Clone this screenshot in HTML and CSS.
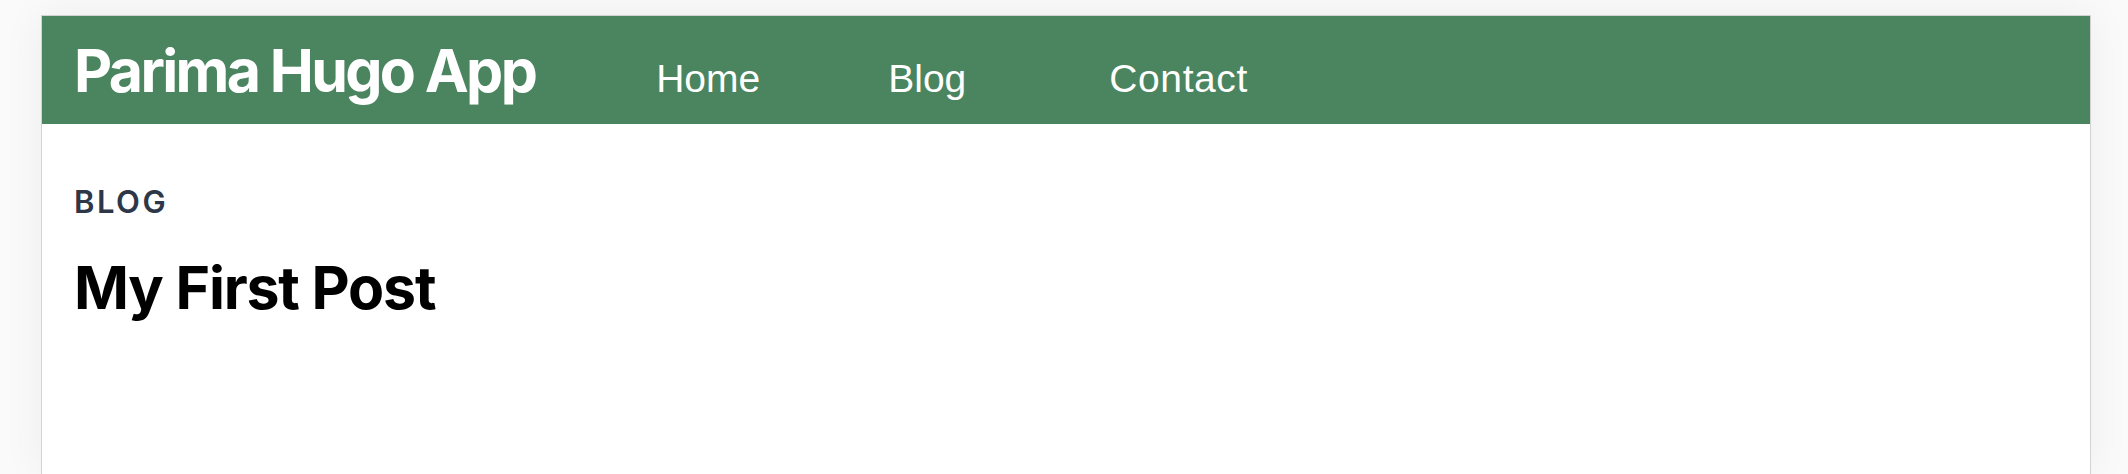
FILE: index.html
```html
<!DOCTYPE html>
<html lang="en">
<head>
<meta charset="utf-8">
<title>Parima Hugo App</title>
<link rel="stylesheet" href="styles.css">
</head>
<body>
<div class="page">
  <div class="card">
    <header class="site-header">
      <a class="brand" href="#">Parima Hugo App</a>
      <nav class="nav">
        <a class="nav-link" href="#">Home</a>
        <a class="nav-link" href="#">Blog</a>
        <a class="nav-link nav-link-last" href="#">Contact</a>
      </nav>
    </header>
    <main class="content">
      <div class="section-label">BLOG</div>
      <h1 class="post-title">My First Post</h1>
    </main>
  </div>
</div>
</body>
</html>
```
FILE: styles.css
```css
* { box-sizing: border-box; }
html, body { margin: 0; padding: 0; }
body {
  background: #fafafa;
  font-family: Inter, "Noto Sans", sans-serif;
  height: 474px;
  overflow: hidden;
}
.page {
  padding: 15px 37px 0 41px;
}
.card {
  background: #ffffff;
  border: 1px solid #d2d2d2;
  border-bottom: none;
  box-shadow: 0 0 40px rgba(0, 0, 0, 0.06);
  height: 459px;
  overflow: hidden;
}
.site-header {
  display: flex;
  align-items: baseline;
  height: 108px;
  padding: 19px 32px 0 32px;
  background: #4a855f;
}
.brand {
  font-family: Inter, sans-serif;
  font-weight: 700;
  font-size: 59px;
  letter-spacing: -2.65px;
  color: #ffffff;
  text-decoration: none;
  line-height: normal;
}
.nav {
  display: flex;
  align-items: baseline;
  gap: 128px;
  margin-left: 121px;
}
.nav-link {
  font-family: "Liberation Sans", Arial, sans-serif;
  font-size: 39px;
  color: #ffffff;
  text-decoration: none;
}
.nav-link-last {
  margin-left: 15px;
  letter-spacing: 0.6px;
}
.content {
  padding: 59px 32px 0 32px;
}
.section-label {
  font-family: Inter, sans-serif;
  font-weight: 600;
  font-size: 31px;
  letter-spacing: 2.5px;
  color: #2d3748;
  line-height: normal;
}
.post-title {
  margin: 32px 0 0 0;
  font-family: Inter, sans-serif;
  font-weight: 700;
  font-size: 59px;
  letter-spacing: -1.2px;
  color: #000000;
  line-height: normal;
}
```
